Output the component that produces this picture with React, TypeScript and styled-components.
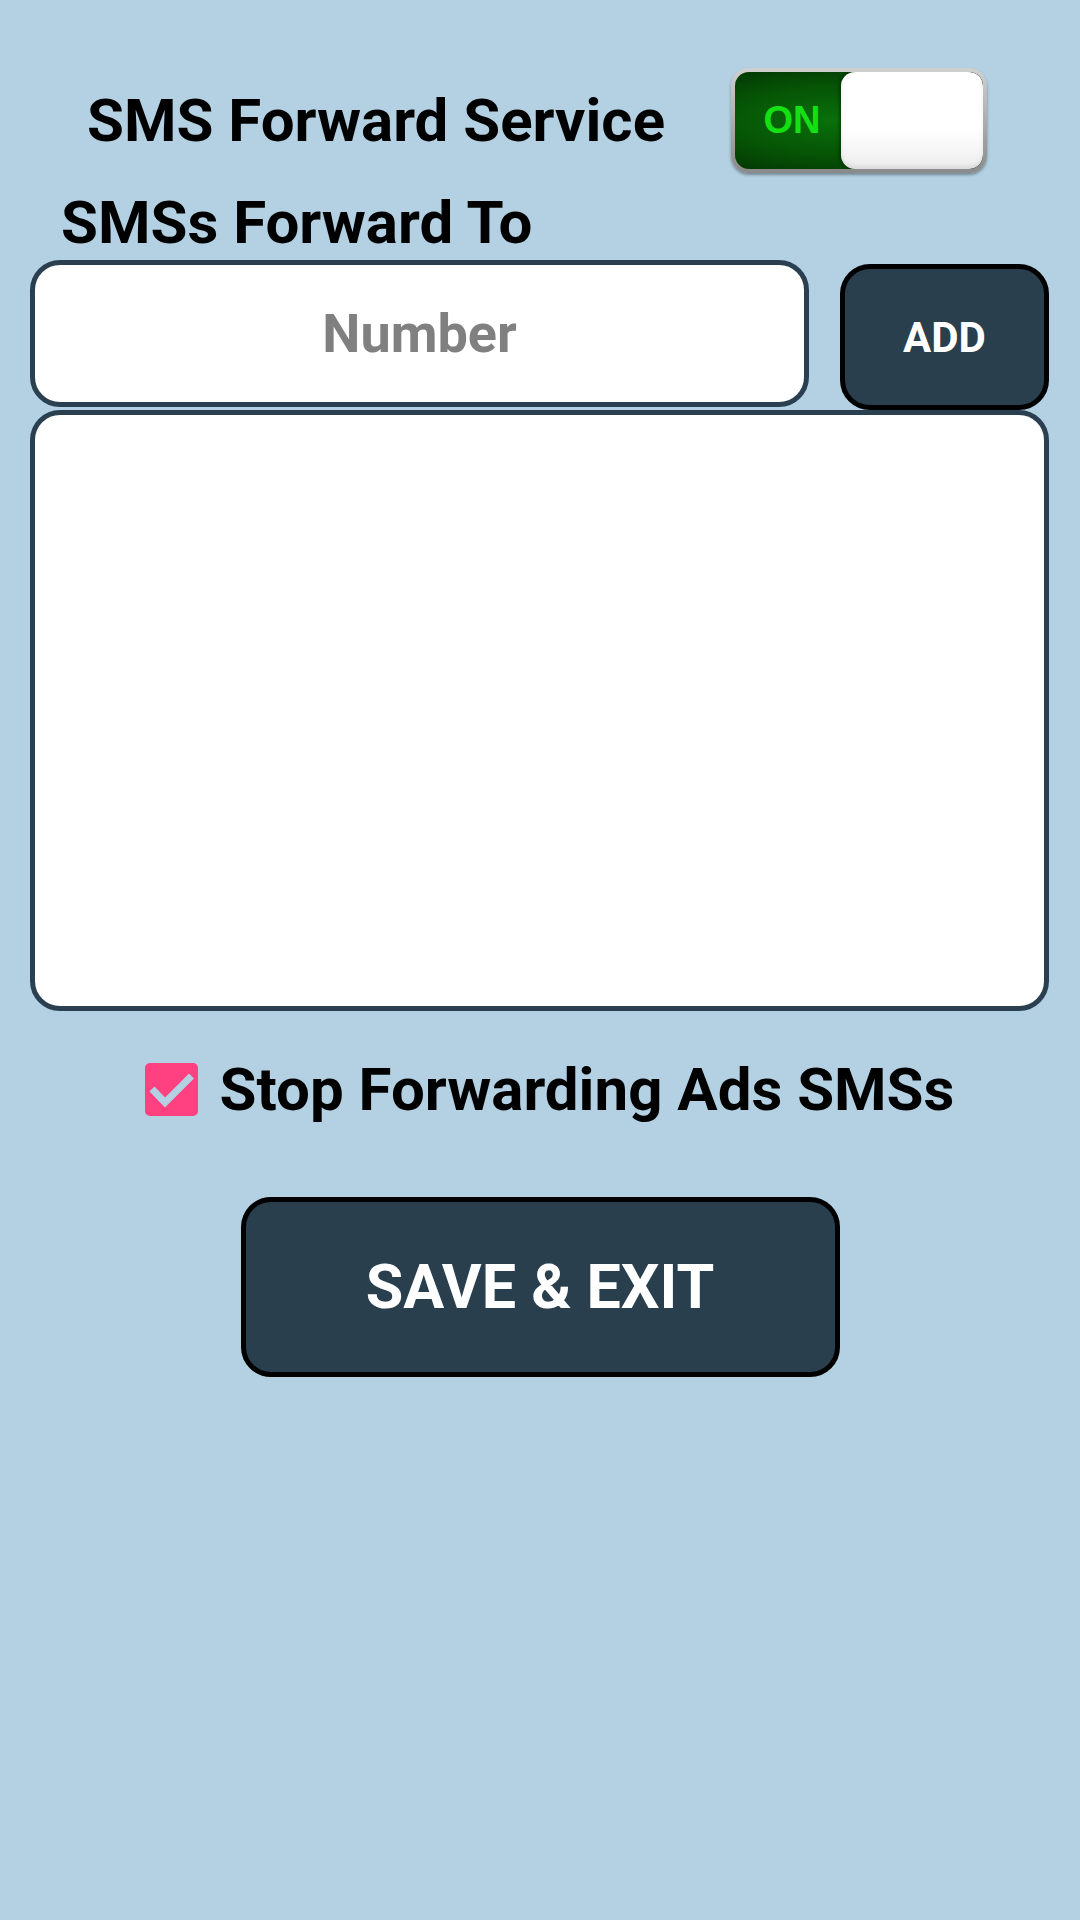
import React, { useState } from "react";
import styled, { createGlobalStyle } from "styled-components";

const GlobalStyle = createGlobalStyle`
  html, body {
    margin: 0;
    padding: 0;
    background: #b3d1e3;
  }
  * {
    box-sizing: border-box;
  }
`;

const Page = styled.div`
  min-height: 1920px;
  width: 1080px;
  background: #b3d1e3;
  font-family: Roboto, "Noto Sans", sans-serif;
  padding: 67px 31px 0 30px;
  display: flex;
  flex-direction: column;
`;

const HeaderRow = styled.div`
  display: flex;
  align-items: center;
  height: 106px;
`;

const Title = styled.h1`
  margin: 0 0 0 57px;
  font-size: 60px;
  font-weight: 700;
  color: #000;
  flex: 1;
`;

const Toggle = styled.div`
  width: 256px;
  height: 105px;
  margin-right: 62px;
  border-radius: 18px;
  padding: 4px;
  background: linear-gradient(#d0d0d0, #8a8a8a);
  box-shadow: 0 2px 3px rgba(0, 0, 0, 0.35);
  display: flex;
  overflow: hidden;
`;

const ToggleTrack = styled.div`
  flex: 1;
  display: flex;
  border-radius: 14px;
  overflow: hidden;
  background: radial-gradient(ellipse at 40% 50%, #0a700a 0%, #065406 50%, #022c02 100%);
`;

const ToggleLabel = styled.span`
  width: 106px;
  display: flex;
  align-items: center;
  justify-content: center;
  font-family: "Liberation Sans", Arial, sans-serif;
  font-weight: 700;
  font-size: 38px;
  color: #14e014;
  padding-left: 8px;
`;

const ToggleKnob = styled.div`
  flex: 1;
  border-radius: 14px;
  background: linear-gradient(#ffffff 0%, #ffffff 60%, #ececec 100%);
  box-shadow: -2px 0 3px rgba(0, 0, 0, 0.35), inset 0 -3px 4px rgba(0, 0, 0, 0.08);
`;

const SectionLabel = styled.h2`
  margin: 14px 0 0 31px;
  font-size: 60px;
  font-weight: 700;
  color: #000;
  line-height: 72px;
`;

const InputRow = styled.div`
  display: flex;
  align-items: flex-start;
  gap: 31px;
  margin-top: 1px;
`;

const NumberInput = styled.input`
  width: 779px;
  height: 147px;
  border: 5px solid #2a4050;
  border-radius: 30px;
  background: #fff;
  text-align: center;
  font-family: Roboto, sans-serif;
  font-weight: 700;
  font-size: 54px;
  color: #222;
  outline: none;

  &::placeholder {
    color: #808080;
  }
`;

const DarkButton = styled.button<{ $size: number }>`
  background: #293f4e;
  border: 5px solid #000;
  border-radius: 30px;
  color: #fff;
  font-family: Roboto, sans-serif;
  font-weight: 700;
  font-size: ${(p) => p.$size}px;
  cursor: pointer;
`;

const AddButton = styled(DarkButton)`
  width: 209px;
  height: 146px;
  margin-top: 4px;
`;

const NumberList = styled.div`
  height: 601px;
  margin-top: 0;
  border: 5px solid #2a4050;
  border-radius: 30px;
  background: #fff;
`;

const CheckRow = styled.label`
  display: flex;
  align-items: center;
  justify-content: center;
  gap: 22px;
  margin-top: 43px;
  padding-left: 20px;
  cursor: pointer;
`;

const CheckBox = styled.span<{ $checked: boolean }>`
  width: 53px;
  height: 53px;
  border-radius: 5px;
  background: ${(p) => (p.$checked ? "#ff4081" : "transparent")};
  border: ${(p) => (p.$checked ? "none" : "4px solid #555")};
  display: flex;
`;

const CheckText = styled.span`
  font-size: 60px;
  font-weight: 700;
  color: #000;
`;

const SaveButton = styled(DarkButton)`
  align-self: center;
  width: 599px;
  height: 180px;
  margin-top: 72px;
  margin-left: 1px;
`;

export default function App() {
  const [adsBlocked, setAdsBlocked] = useState(true);

  return (
    <>
      <GlobalStyle />
      <Page>
        <HeaderRow>
          <Title>SMS Forward Service</Title>
          <Toggle>
            <ToggleTrack>
              <ToggleLabel>ON</ToggleLabel>
              <ToggleKnob />
            </ToggleTrack>
          </Toggle>
        </HeaderRow>

        <SectionLabel>SMSs Forward To</SectionLabel>

        <InputRow>
          <NumberInput placeholder="Number" />
          <AddButton $size={42}>ADD</AddButton>
        </InputRow>

        <NumberList />

        <CheckRow onClick={() => setAdsBlocked((v) => !v)}>
          <CheckBox $checked={adsBlocked}>
            {adsBlocked && (
              <svg width="53" height="53" viewBox="0 0 53 53">
                <path
                  d="M7 26 L20 39.5 L46.5 13"
                  fill="none"
                  stroke="#b3d1e3"
                  strokeWidth="7"
                />
              </svg>
            )}
          </CheckBox>
          <CheckText>Stop Forwarding Ads SMSs</CheckText>
        </CheckRow>

        <SaveButton $size={61}>SAVE &amp; EXIT</SaveButton>
      </Page>
    </>
  );
}
